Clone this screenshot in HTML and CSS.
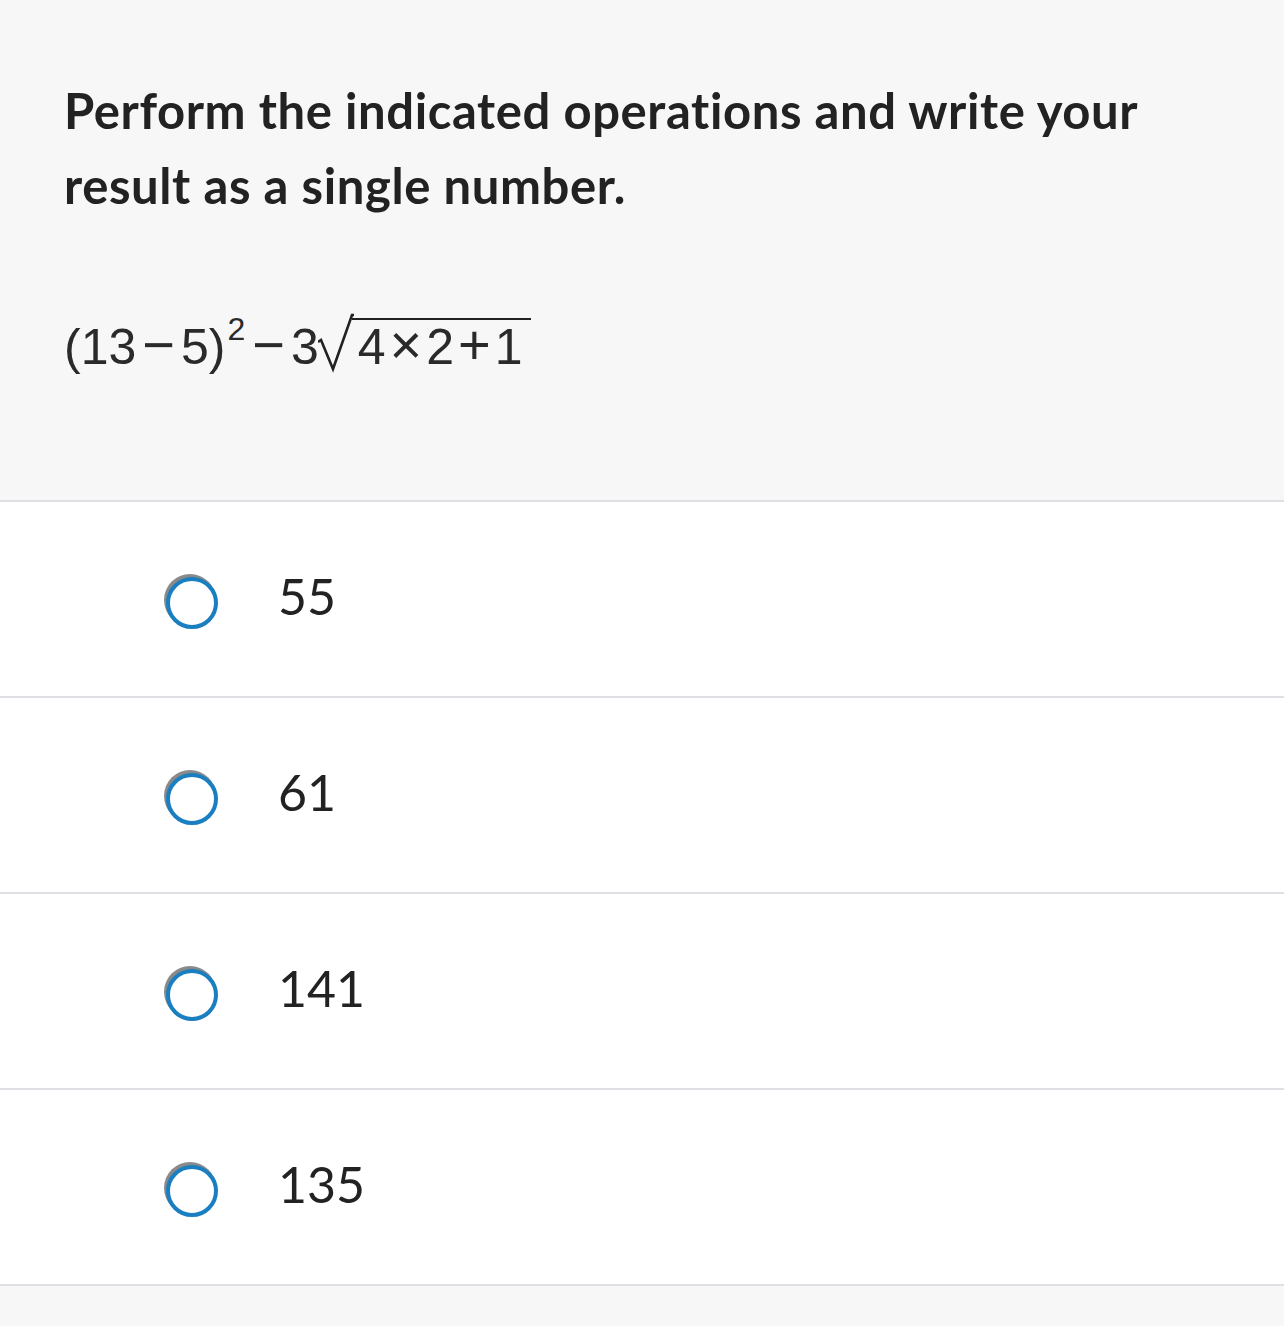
FILE: index.html
```html
<!DOCTYPE html>
<html>
<head>
<meta charset="utf-8">
<link rel="stylesheet" href="styles.css">
</head>
<body>
<div class="question">
  <p class="prompt">Perform the indicated operations and write your result as a single number.</p>
  <div class="math"><span>(13</span><span class="op">−</span><span>5)</span><span class="sup">2</span><span class="op op-wide">−</span><span>3</span><span class="sqrt"><svg class="rad" width="36" height="60" viewBox="0 0 36 60"><polyline points="0,29 3,27 15,56 34,2 36,2" fill="none" stroke="#222" stroke-width="2.6" stroke-linejoin="miter"/></svg><span class="under">4<span class="op in">×</span>2<span class="op in">+</span>1</span></span></div>
</div>
<ul class="options">
  <li class="option"><span class="radio"></span><span class="label">55</span></li>
  <li class="option"><span class="radio"></span><span class="label">61</span></li>
  <li class="option"><span class="radio"></span><span class="label">141</span></li>
  <li class="option"><span class="radio"></span><span class="label">135</span></li>
</ul>
</body>
</html>
```
FILE: styles.css
```css
html, body { margin: 0; padding: 0; }
body { background: #f7f7f7; font-family: Lato, "Open Sans", sans-serif; color: #222; width: 1284px; }
.question { padding: 73px 64px 0 64px; height: 500px; box-sizing: border-box; }
.prompt { margin: 0; font-size: 49px; font-weight: 700; line-height: 75px; letter-spacing: 0.6px; max-width: 1120px; }
.math { margin-top: 90px; font-family: "Liberation Sans", Arial, sans-serif; font-size: 50px; color: #2a2a2a; line-height: 60px; white-space: nowrap; }
.math .op { font-size: 56px; line-height: 0; margin: 0 6px; }
.math .op-wide { margin: 0 6px 0 7px; }
.math .op.in { margin: 0 4px; }
.sup { font-size: 32px; position: relative; top: -24px; margin: 0 0 0 2px; line-height: 0; }
.sqrt { display: inline-block; position: relative; }
.rad { vertical-align: -9px; margin-left: -1px; margin-right: -2px; }
.under { display: inline-block; border-top: 2.6px solid #222; padding-left: 6px; padding-right: 8px; line-height: 54px; vertical-align: baseline; }
.options { list-style: none; margin: 0; padding: 0; border-top: 2px solid #e0dfe3; background: #fff; }
.option { height: 196px; border-bottom: 2px solid #e0dfe3; display: flex; align-items: center; padding-left: 166px; box-sizing: border-box; }
.radio { width: 52px; height: 52px; margin-top: 8px; border-radius: 50%; border: 4.5px solid #1a7fc1; box-sizing: border-box; background: #fff; box-shadow: -2px -3px 0 0 #8a8a8a; flex: none; }
.label { margin-left: 60px; margin-bottom: 6px; font-size: 50px; color: #222; }
```
